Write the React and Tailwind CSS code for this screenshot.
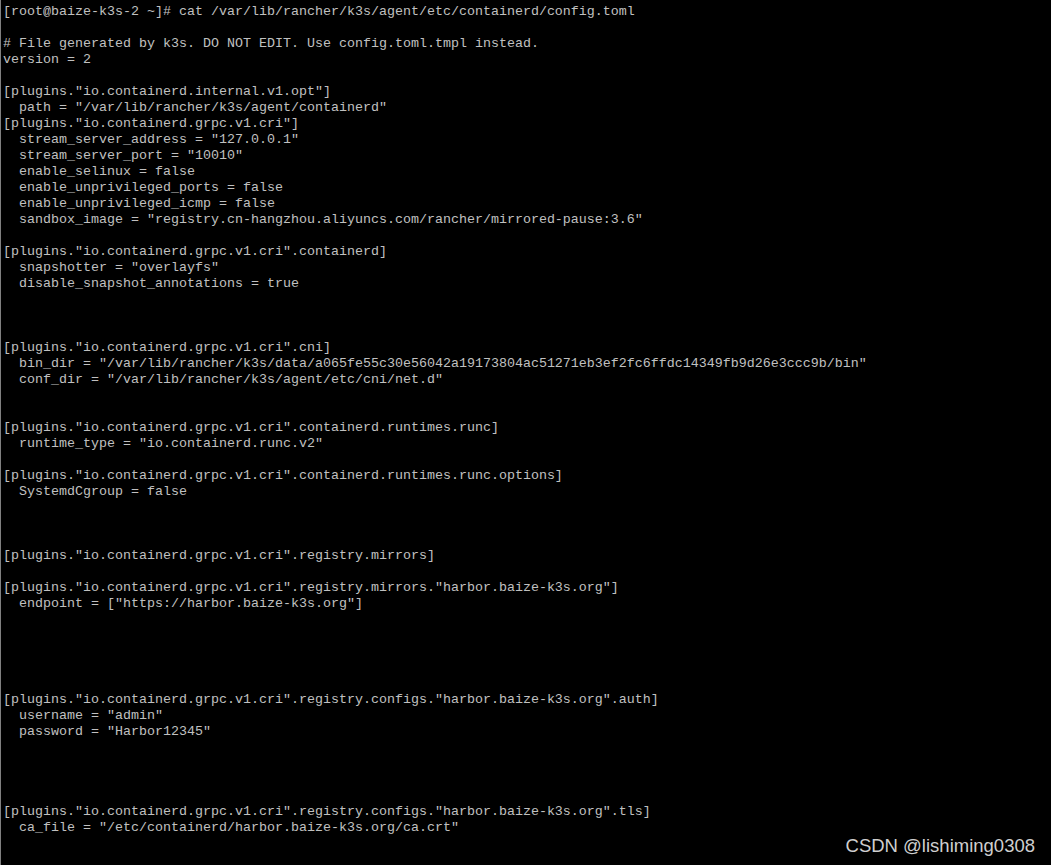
const lines = [
  '[root@baize-k3s-2 ~]# cat /var/lib/rancher/k3s/agent/etc/containerd/config.toml',
  '',
  '# File generated by k3s. DO NOT EDIT. Use config.toml.tmpl instead.',
  'version = 2',
  '',
  '[plugins."io.containerd.internal.v1.opt"]',
  '  path = "/var/lib/rancher/k3s/agent/containerd"',
  '[plugins."io.containerd.grpc.v1.cri"]',
  '  stream_server_address = "127.0.0.1"',
  '  stream_server_port = "10010"',
  '  enable_selinux = false',
  '  enable_unprivileged_ports = false',
  '  enable_unprivileged_icmp = false',
  '  sandbox_image = "registry.cn-hangzhou.aliyuncs.com/rancher/mirrored-pause:3.6"',
  '',
  '[plugins."io.containerd.grpc.v1.cri".containerd]',
  '  snapshotter = "overlayfs"',
  '  disable_snapshot_annotations = true',
  '',
  '',
  '',
  '[plugins."io.containerd.grpc.v1.cri".cni]',
  '  bin_dir = "/var/lib/rancher/k3s/data/a065fe55c30e56042a19173804ac51271eb3ef2fc6ffdc14349fb9d26e3ccc9b/bin"',
  '  conf_dir = "/var/lib/rancher/k3s/agent/etc/cni/net.d"',
  '',
  '',
  '[plugins."io.containerd.grpc.v1.cri".containerd.runtimes.runc]',
  '  runtime_type = "io.containerd.runc.v2"',
  '',
  '[plugins."io.containerd.grpc.v1.cri".containerd.runtimes.runc.options]',
  '  SystemdCgroup = false',
  '',
  '',
  '',
  '[plugins."io.containerd.grpc.v1.cri".registry.mirrors]',
  '',
  '[plugins."io.containerd.grpc.v1.cri".registry.mirrors."harbor.baize-k3s.org"]',
  '  endpoint = ["https://harbor.baize-k3s.org"]',
  '',
  '',
  '',
  '',
  '',
  '[plugins."io.containerd.grpc.v1.cri".registry.configs."harbor.baize-k3s.org".auth]',
  '  username = "admin"',
  '  password = "Harbor12345"',
  '',
  '',
  '',
  '',
  '[plugins."io.containerd.grpc.v1.cri".registry.configs."harbor.baize-k3s.org".tls]',
  '  ca_file = "/etc/containerd/harbor.baize-k3s.org/ca.crt"',
];

export default function App() {
  return (
    <div className="relative w-[1051px] h-[865px] overflow-hidden bg-black border-l border-[#808080]">
      <div
        className="pl-[2px] pt-[4px] text-[#c0c0c0] text-[13.333px] leading-[16px]"
        style={{ fontFamily: '"Liberation Mono", "Courier New", monospace' }}
      >
        {lines.map((l, i) => (
          <div key={i} className="h-4 whitespace-pre">
            {l}
          </div>
        ))}
      </div>
      <div
        className="absolute right-[16px] bottom-[10px] text-[#cfcfcf] text-[18.5px] leading-none"
        style={{ fontFamily: '"Liberation Sans", Arial, sans-serif' }}
      >
        CSDN @lishiming0308
      </div>
    </div>
  );
}
